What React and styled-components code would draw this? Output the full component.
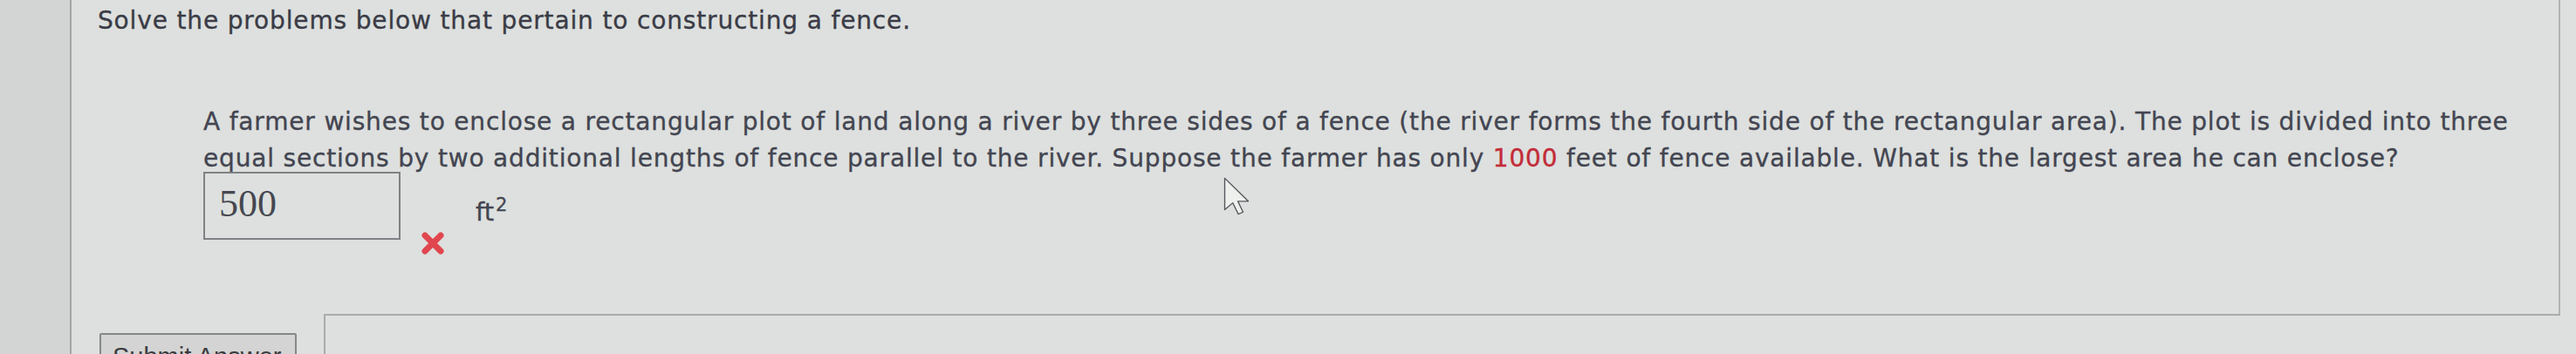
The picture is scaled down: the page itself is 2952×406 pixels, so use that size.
import styled, { createGlobalStyle } from "styled-components";

const GlobalStyle = createGlobalStyle`
  html, body {
    margin: 0;
    padding: 0;
    background: #dcdfdd;
  }
  body {
    font-family: "DejaVu Sans", Verdana, sans-serif;
  }
`;

const Page = styled.div`
  position: relative;
  display: flex;
  width: 2952px;
  height: 406px;
  overflow: hidden;
  background: #dde0de;
`;

const Sidebar = styled.div`
  flex-shrink: 0;
  width: 80px;
  background: #d2d5d3;
  border-right: 2px solid #a2a5a3;
`;

const Main = styled.div`
  display: flex;
  flex-direction: column;
  width: 2852px;
  flex-shrink: 0;
`;

const Card = styled.div`
  flex-shrink: 0;
  height: 360px;
  box-sizing: border-box;
  padding: 9px 0 0 30px;
  border-right: 2px solid #b0b3b1;
`;

const Title = styled.h1`
  margin: 0;
  font-size: 28px;
  line-height: 30px;
  font-weight: normal;
  letter-spacing: 0.85px;
  color: #3a3b46;
  -webkit-text-stroke: 0.35px #3a3b46;
`;

const Problem = styled.div`
  margin-top: 80px;
  padding-left: 121px;
`;

const Statement = styled.p`
  margin: 0;
  font-size: 28px;
  line-height: 42px;
  letter-spacing: 0.82px;
  color: #434551;
  -webkit-text-stroke: 0.35px #434551;
  white-space: nowrap;
`;

const Highlight = styled.span`
  color: #c32b37;
  -webkit-text-stroke: 0.35px #c32b37;
`;

const AnswerRow = styled.div`
  display: flex;
  align-items: flex-start;
  margin-top: -6px;
`;

const AnswerInput = styled.input`
  box-sizing: border-box;
  width: 226px;
  height: 78px;
  padding: 0 0 5px 16px;
  border: 2px solid #7f8184;
  background: transparent;
  font-family: "Liberation Serif", "Times New Roman", serif;
  font-size: 44px;
  color: #464750;
  outline: none;
`;

const WrongMark = styled.svg`
  flex-shrink: 0;
  margin: 68px 0 0 22px;
`;

const Unit = styled.span`
  margin: 24px 0 0 34px;
  font-size: 29px;
  line-height: 29px;
  color: #434551;
  -webkit-text-stroke: 0.3px #434551;
`;

const Power = styled.span`
  font-size: 21px;
  vertical-align: 11px;
  margin-left: 2px;
`;

const BottomRow = styled.div`
  display: flex;
  flex: 1;
  min-height: 0;
`;

const SubmitCell = styled.div`
  width: 289px;
  flex-shrink: 0;
  padding: 22px 0 0 32px;
  box-sizing: border-box;
  overflow: hidden;
`;

const SubmitButton = styled.button`
  box-sizing: border-box;
  width: 226px;
  height: 50px;
  padding: 4px 0 0 13px;
  text-align: left;
  vertical-align: top;
  border: 2px solid #858789;
  border-radius: 2px;
  background: #d3d4d3;
  font-family: "Liberation Sans", Arial, sans-serif;
  font-size: 29px;
  line-height: 34px;
  color: #3a3b40;
  white-space: nowrap;
`;

const Panel = styled.div`
  flex: 1;
  border-top: 2px solid #a9acaa;
  border-left: 2px solid #a9acaa;
`;

const Pointer = styled.svg`
  position: absolute;
  left: 1402px;
  top: 203px;
`;

const CrossIcon = () => (
  <WrongMark width="30" height="28" viewBox="0 0 30 28">
    <path
      d="M6 5 L24 23 M24 5 L6 23"
      stroke="#e1464f"
      strokeWidth="7"
      strokeLinecap="round"
      fill="none"
    />
  </WrongMark>
);

const CursorIcon = () => (
  <Pointer width="30" height="44" viewBox="0 0 12 19" preserveAspectRatio="none">
    <path
      d="M0.6 0.6 L0.6 16.2 L4.3 12.8 L6.8 18.4 L9 17.4 L6.6 12 L11.4 12 Z"
      fill="#eef0ee"
      stroke="#55565c"
      strokeWidth="0.55"
      strokeLinejoin="round"
    />
  </Pointer>
);

const App = () => {
  return (
    <>
      <GlobalStyle />
      <Page>
        <Sidebar />
        <Main>
          <Card>
            <Title>Solve the problems below that pertain to constructing a fence.</Title>
            <Problem>
              <Statement>
                A farmer wishes to enclose a rectangular plot of land along a river by three sides of a
                fence (the river forms the fourth side of the rectangular area). The plot is divided into three
                <br />
                equal sections by two additional lengths of fence parallel to the river. Suppose the farmer
                has only <Highlight>1000</Highlight> feet of fence available. What is the largest area he can
                enclose?
              </Statement>
              <AnswerRow>
                <AnswerInput type="text" defaultValue="500" readOnly />
                <CrossIcon />
                <Unit>
                  ft<Power>2</Power>
                </Unit>
              </AnswerRow>
            </Problem>
          </Card>
          <BottomRow>
            <SubmitCell>
              <SubmitButton type="button">Submit Answer</SubmitButton>
            </SubmitCell>
            <Panel />
          </BottomRow>
        </Main>
        <CursorIcon />
      </Page>
    </>
  );
};

export default App;
